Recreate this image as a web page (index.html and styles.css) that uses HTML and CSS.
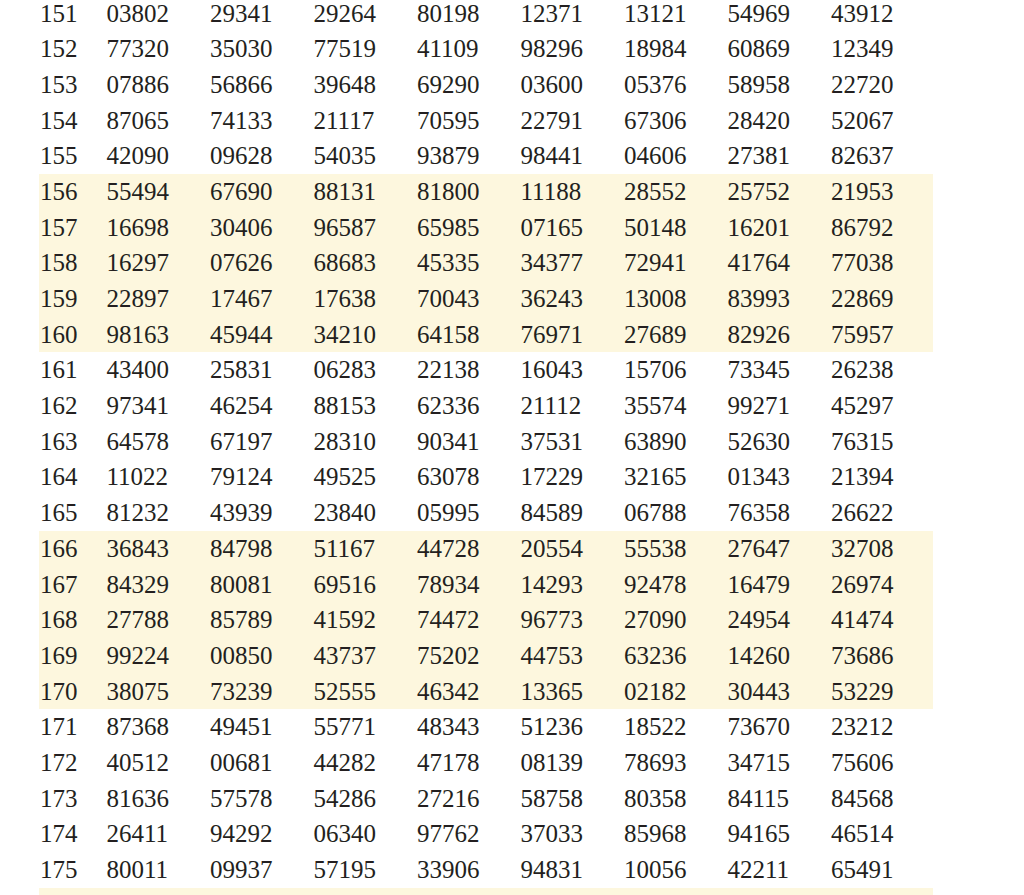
FILE: index.html
```html
<!DOCTYPE html>
<html>
<head>
<meta charset="utf-8">
<link rel="stylesheet" href="styles.css">
</head>
<body>
<div class="table">
  <div class="group">
    <div class="row"><span>151</span><span>03802</span><span>29341</span><span>29264</span><span>80198</span><span>12371</span><span>13121</span><span>54969</span><span>43912</span></div>
    <div class="row"><span>152</span><span>77320</span><span>35030</span><span>77519</span><span>41109</span><span>98296</span><span>18984</span><span>60869</span><span>12349</span></div>
    <div class="row"><span>153</span><span>07886</span><span>56866</span><span>39648</span><span>69290</span><span>03600</span><span>05376</span><span>58958</span><span>22720</span></div>
    <div class="row"><span>154</span><span>87065</span><span>74133</span><span>21117</span><span>70595</span><span>22791</span><span>67306</span><span>28420</span><span>52067</span></div>
    <div class="row"><span>155</span><span>42090</span><span>09628</span><span>54035</span><span>93879</span><span>98441</span><span>04606</span><span>27381</span><span>82637</span></div>
  </div>
  <div class="group band">
    <div class="row"><span>156</span><span>55494</span><span>67690</span><span>88131</span><span>81800</span><span>11188</span><span>28552</span><span>25752</span><span>21953</span></div>
    <div class="row"><span>157</span><span>16698</span><span>30406</span><span>96587</span><span>65985</span><span>07165</span><span>50148</span><span>16201</span><span>86792</span></div>
    <div class="row"><span>158</span><span>16297</span><span>07626</span><span>68683</span><span>45335</span><span>34377</span><span>72941</span><span>41764</span><span>77038</span></div>
    <div class="row"><span>159</span><span>22897</span><span>17467</span><span>17638</span><span>70043</span><span>36243</span><span>13008</span><span>83993</span><span>22869</span></div>
    <div class="row"><span>160</span><span>98163</span><span>45944</span><span>34210</span><span>64158</span><span>76971</span><span>27689</span><span>82926</span><span>75957</span></div>
  </div>
  <div class="group">
    <div class="row"><span>161</span><span>43400</span><span>25831</span><span>06283</span><span>22138</span><span>16043</span><span>15706</span><span>73345</span><span>26238</span></div>
    <div class="row"><span>162</span><span>97341</span><span>46254</span><span>88153</span><span>62336</span><span>21112</span><span>35574</span><span>99271</span><span>45297</span></div>
    <div class="row"><span>163</span><span>64578</span><span>67197</span><span>28310</span><span>90341</span><span>37531</span><span>63890</span><span>52630</span><span>76315</span></div>
    <div class="row"><span>164</span><span>11022</span><span>79124</span><span>49525</span><span>63078</span><span>17229</span><span>32165</span><span>01343</span><span>21394</span></div>
    <div class="row"><span>165</span><span>81232</span><span>43939</span><span>23840</span><span>05995</span><span>84589</span><span>06788</span><span>76358</span><span>26622</span></div>
  </div>
  <div class="group band">
    <div class="row"><span>166</span><span>36843</span><span>84798</span><span>51167</span><span>44728</span><span>20554</span><span>55538</span><span>27647</span><span>32708</span></div>
    <div class="row"><span>167</span><span>84329</span><span>80081</span><span>69516</span><span>78934</span><span>14293</span><span>92478</span><span>16479</span><span>26974</span></div>
    <div class="row"><span>168</span><span>27788</span><span>85789</span><span>41592</span><span>74472</span><span>96773</span><span>27090</span><span>24954</span><span>41474</span></div>
    <div class="row"><span>169</span><span>99224</span><span>00850</span><span>43737</span><span>75202</span><span>44753</span><span>63236</span><span>14260</span><span>73686</span></div>
    <div class="row"><span>170</span><span>38075</span><span>73239</span><span>52555</span><span>46342</span><span>13365</span><span>02182</span><span>30443</span><span>53229</span></div>
  </div>
  <div class="group">
    <div class="row"><span>171</span><span>87368</span><span>49451</span><span>55771</span><span>48343</span><span>51236</span><span>18522</span><span>73670</span><span>23212</span></div>
    <div class="row"><span>172</span><span>40512</span><span>00681</span><span>44282</span><span>47178</span><span>08139</span><span>78693</span><span>34715</span><span>75606</span></div>
    <div class="row"><span>173</span><span>81636</span><span>57578</span><span>54286</span><span>27216</span><span>58758</span><span>80358</span><span>84115</span><span>84568</span></div>
    <div class="row"><span>174</span><span>26411</span><span>94292</span><span>06340</span><span>97762</span><span>37033</span><span>85968</span><span>94165</span><span>46514</span></div>
    <div class="row"><span>175</span><span>80011</span><span>09937</span><span>57195</span><span>33906</span><span>94831</span><span>10056</span><span>42211</span><span>65491</span></div>
  </div>
  <div class="group band">
    <div class="row empty"></div>
  </div>
</div>
</body>
</html>
```
FILE: styles.css
```css
html, body {
  margin: 0;
  padding: 0;
  background: #ffffff;
}
body {
  overflow: hidden;
  height: 895px;
}
.table {
  margin-top: -4.5px;
  font-family: "Liberation Serif", "Times New Roman", serif;
  font-size: 25px;
  line-height: 35.7px;
  color: #231f20;
}
.group {
  margin-left: 39px;
  width: 894px;
}
.band {
  background: #fdf7de;
}
.row {
  display: grid;
  grid-template-columns: 66.5px repeat(7, 103.5px) 1fr;
  padding-left: 1px;
  height: 35.7px;
  white-space: nowrap;
}
```
